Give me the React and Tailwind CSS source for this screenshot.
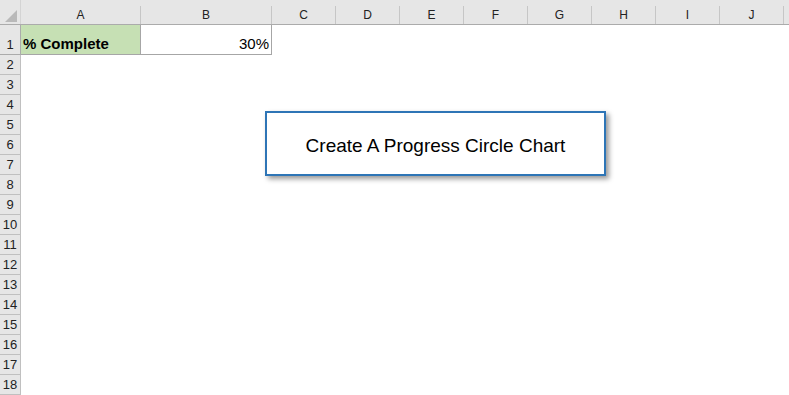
import React from 'react';

const cols = [
  { name: 'A', w: 'w-[120px]' },
  { name: 'B', w: 'w-[131px]' },
  { name: 'C', w: 'w-[64px]' },
  { name: 'D', w: 'w-[64px]' },
  { name: 'E', w: 'w-[64px]' },
  { name: 'F', w: 'w-[64px]' },
  { name: 'G', w: 'w-[64px]' },
  { name: 'H', w: 'w-[64px]' },
  { name: 'I', w: 'w-[64px]' },
  { name: 'J', w: 'w-[64px]' },
  { name: '', w: 'w-[64px]' },
];

const rows = Array.from({ length: 17 }, (_, i) => i + 2);

export default function App() {
  return (
    <div className="relative w-[789px] h-[395px] overflow-hidden bg-white font-['Liberation_Sans',Arial,sans-serif]">
      {/* column headers */}
      <div className="flex h-[25px] bg-[#e6e6e6] border-b border-[#ababab]">
        <div className="relative w-[21px] shrink-0 border-r border-[#d4d4d4]">
          <svg className="absolute left-[5px] top-[10px]" width="12" height="12" viewBox="0 0 12 12">
            <polygon points="12,0 12,12 0,12" fill="#b9b9b9" />
          </svg>
        </div>
        {cols.map((c, i) => (
          <div key={i} className={`${c.w} shrink-0 flex flex-col`}>
            <div className="h-[6px]" />
            <div className="flex-1 flex items-center justify-center border-r border-[#c6c6c6] text-[12px] text-[#222] leading-none pb-[1px]">
              {c.name}
            </div>
          </div>
        ))}
      </div>

      {/* row 1 */}
      <div className="flex h-[30px]">
        <div className="w-[21px] shrink-0 bg-[#e6e6e6] border-r border-b border-[#ababab] flex items-end justify-center pb-[3px] text-[13px] text-[#222] leading-none">
          1
        </div>
        <div className="w-[120px] shrink-0 bg-[#c6e0b4] border-r border-b border-[#a6a6a6] flex items-end pl-[2px] pb-[3px] text-[15px] font-bold text-black leading-none">
          % Complete
        </div>
        <div className="w-[131px] shrink-0 border-r border-b border-[#a6a6a6] flex items-end justify-end pr-[2px] pb-[3px] text-[15px] text-black leading-none">
          30%
        </div>
      </div>

      {/* rows 2+ */}
      {rows.map((r) => (
        <div key={r} className="flex h-[20px]">
          <div className="w-[21px] shrink-0 bg-[#e6e6e6] border-r border-b border-[#c0c0c0] flex items-center justify-center text-[13px] text-[#222] leading-none">
            {r}
          </div>
        </div>
      ))}

      {/* floating shape */}
      <div className="absolute left-[265px] top-[111px] w-[341px] h-[65px] bg-white border-2 border-[#2e75b6] shadow-[3px_3px_5px_rgba(0,0,0,0.4)] flex items-center justify-center pt-[3px]">
        <span className="text-[19px] text-black leading-none">Create A Progress Circle Chart</span>
      </div>
    </div>
  );
}
